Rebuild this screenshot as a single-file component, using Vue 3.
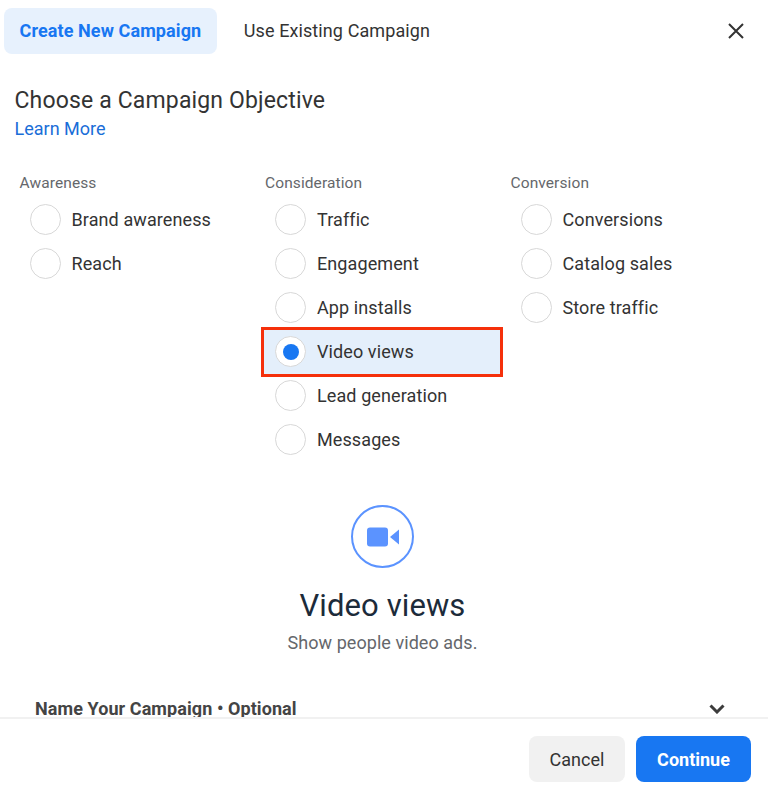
<script setup>
const columns = [
  { title: 'Awareness', items: ['Brand awareness', 'Reach'] },
  { title: 'Consideration', items: ['Traffic', 'Engagement', 'App installs', 'Video views', 'Lead generation', 'Messages'] },
  { title: 'Conversion', items: ['Conversions', 'Catalog sales', 'Store traffic'] }
]
const selected = 'Video views'
</script>

<template>
  <div class="dialog">
    <div class="content">
      <header class="tabs">
        <div class="tab active">Create New Campaign</div>
        <div class="tab">Use Existing Campaign</div>
        <svg class="close" width="18" height="18" viewBox="0 0 18 18" aria-hidden="true">
          <path d="M2 2 L16 16 M16 2 L2 16" stroke="#333" stroke-width="2" fill="none" />
        </svg>
      </header>

      <h1 class="title">Choose a Campaign Objective</h1>
      <a class="learn">Learn More</a>

      <div class="columns">
        <section v-for="col in columns" :key="col.title" class="column">
          <div class="col-title">{{ col.title }}</div>
          <div
            v-for="item in col.items"
            :key="item"
            class="option"
            :class="{ selected: item === selected }"
          >
            <span class="radio"><span v-if="item === selected" class="dot"></span></span>
            <span class="label">{{ item }}</span>
          </div>
        </section>
      </div>

      <div class="detail">
        <div class="badge">
          <svg width="33" height="20" viewBox="0 0 33 20" aria-hidden="true">
            <rect x="0" y="0.5" width="21" height="19" rx="3" fill="#5b93ff" />
            <path d="M23 10 L32 2.5 V17.5 Z" fill="#5b93ff" />
          </svg>
        </div>
        <h2 class="detail-title">Video views</h2>
        <p class="detail-text">Show people video ads.</p>
      </div>

      <div class="name-row">
        <span>Name Your Campaign • Optional</span>
        <svg width="16" height="10" viewBox="0 0 16 10" aria-hidden="true">
          <path d="M1.5 1.5 L8 8 L14.5 1.5" stroke="#3c3c3c" stroke-width="3" fill="none" />
        </svg>
      </div>
    </div>

    <footer class="footer">
      <button class="btn cancel">Cancel</button>
      <button class="btn continue">Continue</button>
    </footer>
  </div>
</template>

<style>
html, body { margin: 0; background: #fff; }
</style>

<style scoped>
.dialog {
  width: 768px;
  height: 794px;
  display: flex;
  flex-direction: column;
  background: #fff;
  font-family: Roboto, "Liberation Sans", sans-serif;
  color: #333;
}
.content {
  flex: 1;
  min-height: 0;
  display: flex;
  flex-direction: column;
}
.tabs {
  display: flex;
  align-items: center;
  height: 46px;
  margin-top: 8px;
  padding-left: 4px;
  gap: 11px;
}
.tab {
  height: 46px;
  line-height: 46px;
  padding: 0 16px;
  border-radius: 8px;
  font-size: 18px;
  letter-spacing: 0.1px;
  color: #333;
}
.tab:first-child { padding: 0 15.5px; }
.tab.active {
  background: #e7f1fd;
  color: #1877f2;
  font-weight: 700;
}
.close { margin-left: auto; margin-right: 23px; }
.title {
  margin: 31px 0 0 14.5px;
  font-size: 23px;
  line-height: 32px;
  font-weight: 400;
  letter-spacing: 0.15px;
}
.learn {
  margin: -1px 0 0 14.5px;
  font-size: 18px;
  line-height: 26px;
  color: #1a6ed8;
}
.columns {
  display: flex;
  margin-top: 31px;
  padding-left: 19.5px;
}
.column { width: 245.5px; }
.col-title {
  font-size: 15.5px;
  line-height: 20px;
  letter-spacing: 0.1px;
  color: #65676b;
  margin-bottom: 4px;
}
.option {
  display: flex;
  align-items: center;
  height: 44px;
  width: 235px;
  box-sizing: border-box;
  padding-left: 10px;
}
.option.selected {
  width: 236px;
  margin: 1px 0 -1px -1px;
  padding-left: 11px;
  padding-bottom: 1px;
  background: #e4effb;
  outline: 3px solid #f5300b;
  outline-offset: 0;
}
.radio {
  width: 31px;
  height: 31px;
  box-sizing: border-box;
  border: 1.5px solid #d8d8d8;
  border-radius: 50%;
  background: #fff;
  display: flex;
  align-items: center;
  justify-content: center;
  flex: none;
}
.dot {
  width: 16px;
  height: 16px;
  border-radius: 50%;
  background: #1877f2;
}
.label {
  margin-left: 11px;
  font-size: 18px;
  letter-spacing: 0.1px;
}
.detail {
  display: flex;
  flex-direction: column;
  align-items: center;
  margin-top: 44px;
  padding-right: 3px;
}
.badge {
  width: 63px;
  height: 63px;
  box-sizing: border-box;
  border: 2px solid #5b93ff;
  border-radius: 50%;
  padding-left: 1px;
  display: flex;
  align-items: center;
  justify-content: center;
}
.detail-title {
  margin: 18px 0 0;
  font-size: 31px;
  line-height: 40px;
  font-weight: 400;
  color: #1c2b3a;
  letter-spacing: 0.1px;
}
.detail-text {
  margin: 5px 0 0;
  font-size: 18px;
  line-height: 24px;
  letter-spacing: 0.05px;
  color: #65676b;
}
.name-row {
  display: flex;
  align-items: center;
  justify-content: space-between;
  margin-top: 46px;
  padding: 0 43px 0 35px;
  font-size: 18px;
  line-height: 16px;
  font-weight: 700;
  letter-spacing: 0.08px;
  color: #444;
  flex: none;
}
.footer {
  flex: none;
  height: 77px;
  box-sizing: border-box;
  border-top: 2px solid #f1f1f1;
  display: flex;
  justify-content: flex-end;
  align-items: flex-start;
  gap: 11px;
  padding: 17px 17px 0 0;
}
.btn {
  height: 46px;
  border: 0;
  border-radius: 8px;
  font-family: inherit;
  font-size: 18px;
}
.cancel { width: 96px; background: #f1f1f1; color: #333; }
.continue { width: 115px; background: #1877f2; color: #fff; font-weight: 700; }
</style>
